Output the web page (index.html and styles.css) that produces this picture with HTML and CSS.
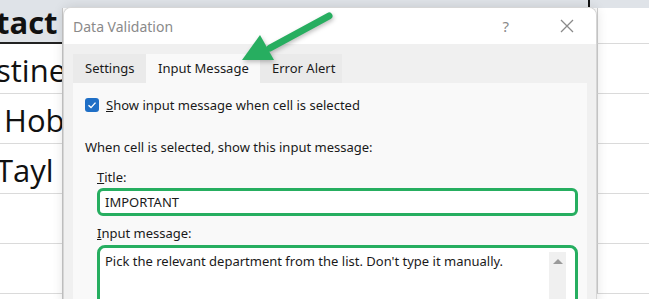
FILE: index.html
```html
<!DOCTYPE html>
<html lang="en">
	<head>
		<meta charset="UTF-8" />
		<title>Data Validation</title>
		<link rel="stylesheet" href="styles.css">
	</head>

	<body>
		<!-- feuille de calcul en fond -->
		<div class="sheet">
			<div class="strip"><span class="strip-mark"></span></div>
			<div class="col-a">
				<div class="cell head">tact</div>
				<div class="cell">stine</div>
				<div class="cell">&nbsp;Hob</div>
				<div class="cell">Tayl</div>
				<div class="cell"></div>
				<div class="cell"></div>
			</div>
			<div class="col-b">
				<div class="cell"></div>
				<div class="cell"></div>
				<div class="cell"></div>
				<div class="cell"></div>
				<div class="cell"></div>
				<div class="cell"></div>
			</div>
		</div>

		<!-- boîte de dialogue -->
		<div class="dialog">
			<div class="titlebar">
				<span class="title">Data Validation</span>
				<span class="help">?</span>
				<svg class="close" width="14" height="14" viewBox="0 0 14 14">
					<path d="M1 1 L13 13 M13 1 L1 13" stroke="#8a8a8a" stroke-width="1.3" fill="none" />
				</svg>
			</div>

			<div class="body">
				<div class="tabs">
					<div class="tab">Settings</div>
					<div class="tab active">Input Message</div>
					<div class="tab">Error Alert</div>
				</div>

				<div class="panel">
					<label class="check-row">
						<span class="checkbox">
							<svg width="14" height="14" viewBox="0 0 14 14">
								<path d="M3.5 7.3 L6 9.6 L10.5 4.6" stroke="#fff" stroke-width="1.4" fill="none" />
							</svg>
						</span>
						<span><u>S</u>how input message when cell is selected</span>
					</label>

					<p class="intro">When cell is selected, show this input message:</p>

					<div class="field">
						<div class="label"><u>T</u>itle:</div>
						<div class="box title-box">IMPORTANT</div>
						<div class="label"><u>I</u>nput message:</div>
						<div class="box msg-box">
							<span>Pick the relevant department from the list. Don't type it manually.</span>
							<div class="scroll"><span class="arrow-up"></span></div>
						</div>
					</div>
				</div>
			</div>
		</div>

		<!-- flèche verte d'annotation -->
		<svg class="pointer" width="110" height="60" viewBox="0 0 110 60">
			<line x1="97" y1="8" x2="38" y2="40" stroke="#27ae60" stroke-width="7" stroke-linecap="round" />
			<polygon points="10,52 28,27 42,52" fill="#27ae60" />
		</svg>
	</body>
</html>
```

FILE: styles.css
```css
body {
	margin: 0;
	width: 649px;
	height: 299px;
	overflow: hidden;
	position: relative;
	background: #fff;
	font-family: "Noto Sans", sans-serif;
}

/* feuille de calcul */
.sheet {
	display: grid;
	grid-template-columns: 63px 1fr;
	grid-template-rows: 8px 1fr;
	height: 299px;
}
.strip {
	grid-column: 1 / 3;
	background: #dfe3e8;
	position: relative;
}
.strip-mark {
	position: absolute;
	left: 588px;
	top: 0;
	width: 2px;
	height: 8px;
	background: #111;
}
.col-a {
	margin-top: -8px;
	border-right: 1px solid #c8c8c8;
}
.col-b {
	padding-left: 534px;
}
.cell {
	height: 49px;
	border-bottom: 1px solid #dadada;
	font-family: "Open Sans", sans-serif;
	font-size: 31px;
	line-height: 52px;
	color: #111;
	white-space: nowrap;
	overflow: hidden;
}
.col-b .cell {
	border-left: 1px solid #cfcfcf;
}
.col-b .cell:first-child {
	height: 35px;
}
.col-a .head {
	height: 42px;
	background: #dfe3e8;
	border-bottom: 2px solid #222;
	font-weight: bold;
	line-height: 44px;
}
.col-a .cell {
	margin-left: -4px;
}

/* boîte de dialogue */
.dialog {
	position: absolute;
	left: 63px;
	top: 7px;
	width: 534px;
	height: 300px;
	border-radius: 8px 8px 0 0;
	border: 1px solid #d6d6d6;
	border-bottom: none;
	box-sizing: border-box;
	background: #f0f0f0;
	overflow: hidden;
	box-shadow: 0 0 12px rgba(0, 0, 0, 0.12);
}
.titlebar {
	height: 36px;
	background: #fff;
	display: flex;
	align-items: center;
	padding-left: 9px;
	color: #8a8a8a;
	font-size: 14px;
}
.title {
	flex: 1;
}
.help {
	font-size: 15px;
	margin-right: 51px;
}
.close {
	margin-right: 22px;
}
.body {
	padding: 10px 9px 0 9px;
	font-size: 13px;
	color: #1a1a1a;
}
.tabs {
	display: flex;
	height: 29px;
}
.tab {
	box-sizing: border-box;
	padding: 0 12px;
	line-height: 29px;
	background: #eaeaea;
	font-size: 13px;
	white-space: nowrap;
}
.tab:first-child {
	width: 73px;
}
.tab.active {
	background: #f9f9f9;
	width: 114px;
}
.tab:last-child {
	width: 82px;
}
.panel {
	background: #f9f9f9;
	height: 220px;
	padding: 13px 0 0 12px;
}
.check-row {
	display: flex;
	align-items: center;
	gap: 7px;
}
.checkbox {
	width: 14px;
	height: 14px;
	border-radius: 3px;
	background: #1f6fc6;
	display: flex;
}
.intro {
	margin: 24px 0 0 0;
}
.field {
	padding: 12px 0 0 12px;
	width: 481px;
}
.label {
	line-height: 18px;
}
.box {
	background: #fff;
	border: 3px solid #26ae60;
	border-radius: 6px;
	padding: 0 5px;
}
.title-box {
	height: 22px;
	line-height: 22px;
	margin: 2px 0 8px 0;
}
.msg-box {
	margin-top: 3px;
	height: 80px;
	display: flex;
	justify-content: space-between;
	border-radius: 8px 8px 0 0;
	padding-top: 4px;
}
.scroll {
	width: 17px;
	background: #f0f0f0;
	margin-right: 4px;
	display: flex;
	justify-content: center;
	padding-top: 7px;
}
.arrow-up {
	width: 0;
	height: 0;
	border-left: 5px solid transparent;
	border-right: 5px solid transparent;
	border-bottom: 5px solid #9a9a9a;
}

/* flèche */
.pointer {
	position: absolute;
	left: 232px;
	top: 8px;
	filter: drop-shadow(1px 2px 2px rgba(0, 0, 0, 0.25));
}
```
